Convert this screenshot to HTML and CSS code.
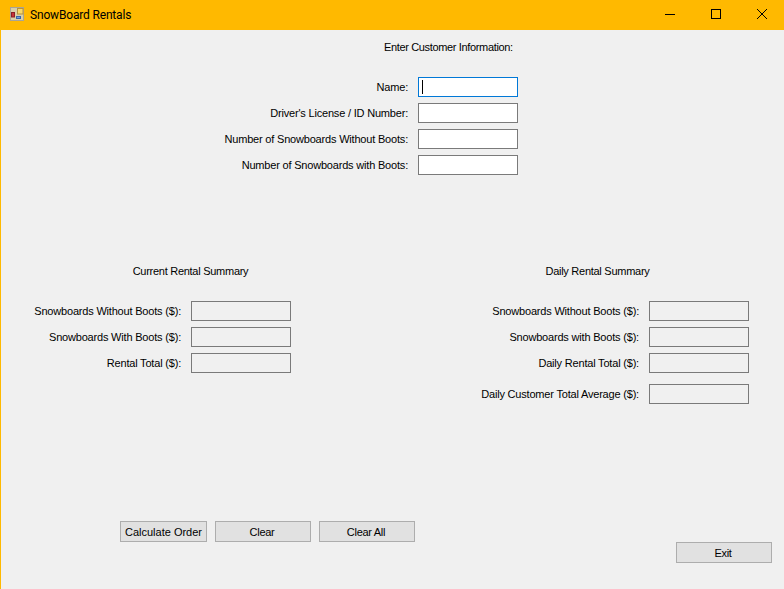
FILE: index.html
```html
<!DOCTYPE html>
<html lang="en">
<head>
<meta charset="utf-8">
<title>SnowBoard Rentals</title>
<link rel="stylesheet" href="styles.css">
</head>
<body>
<div class="window">
  <header class="titlebar">
    <svg class="app-icon" width="14" height="14" viewBox="0 0 14 14">
      <rect x="0.5" y="0.5" width="13" height="13" fill="#d9cfa8" stroke="#a8a498"/>
      <rect x="7.5" y="1.5" width="5.5" height="5.5" fill="#f8d868" stroke="#b8923a"/>
      <rect x="1.5" y="5.5" width="3" height="4.5" fill="#c8323a" stroke="#8a2026"/>
      <rect x="6.5" y="9.5" width="4" height="2" fill="#6f9fdc" stroke="#3a66a8"/>
    </svg>
    <span class="app-title">SnowBoard Rentals</span>
    <div class="controls">
      <div class="control"><svg width="12" height="12" viewBox="0 0 12 12"><path d="M1 5.5H11" stroke="#000"/></svg></div>
      <div class="control"><svg width="12" height="12" viewBox="0 0 12 12"><rect x="1.5" y="0.5" width="9" height="9" fill="none" stroke="#000"/></svg></div>
      <div class="control"><svg width="12" height="12" viewBox="0 0 12 12"><path d="M1 0L11 10M11 0L1 10" stroke="#000"/></svg></div>
    </div>
  </header>

  <main class="client">
    <section class="customer">
      <h2 class="heading customer-heading">Enter Customer Information:</h2>
      <div class="form">
        <label class="label">Name:</label><div class="box input focused"><span class="caret"></span></div>
        <label class="label">Driver's License / ID Number:</label><div class="box input"></div>
        <label class="label">Number of Snowboards Without Boots:</label><div class="box input"></div>
        <label class="label">Number of Snowboards with Boots:</label><div class="box input"></div>
      </div>
    </section>

    <section class="summaries">
      <div class="summary current">
        <h2 class="heading summary-heading">Current Rental Summary</h2>
        <div class="form">
          <label class="label">Snowboards Without Boots ($):</label><div class="box output"></div>
          <label class="label">Snowboards With Boots ($):</label><div class="box output"></div>
          <label class="label">Rental Total ($):</label><div class="box output"></div>
        </div>
      </div>
      <div class="summary daily">
        <h2 class="heading summary-heading">Daily Rental Summary</h2>
        <div class="form">
          <label class="label">Snowboards Without Boots ($):</label><div class="box output"></div>
          <label class="label">Snowboards with Boots ($):</label><div class="box output"></div>
          <label class="label">Daily Rental Total ($):</label><div class="box output"></div>
          <label class="label average">Daily Customer Total Average ($):</label><div class="box output average"></div>
        </div>
      </div>
    </section>

    <section class="actions">
      <div class="action-group">
        <button class="btn btn-calc" type="button">Calculate Order</button>
        <button class="btn btn-wide" type="button">Clear</button>
        <button class="btn btn-wide" type="button">Clear All</button>
      </div>
      <button class="btn btn-wide btn-exit" type="button">Exit</button>
    </section>
  </main>
</div>
</body>
</html>
```

FILE: styles.css
```css
* { box-sizing: border-box; }
html, body { margin: 0; padding: 0; }
body {
  width: 784px;
  height: 589px;
  overflow: hidden;
  font-family: "Liberation Sans", Arial, sans-serif;
  font-size: 11px;
  color: #000;
  background: #f0f0f0;
}
.window {
  display: flex;
  flex-direction: column;
  width: 784px;
  height: 589px;
  border-left: 1px solid #ffb900;
}
.titlebar {
  display: flex;
  align-items: center;
  height: 30px;
  margin-left: -1px;
  padding-left: 10px;
  background: #ffb900;
  flex: none;
}
.app-icon { flex: none; margin-top: -2px; }
.app-title {
  margin-left: 6px;
  font-family: Roboto, "Open Sans", sans-serif;
  font-size: 12px;
  letter-spacing: -0.17px;
  color: #000;
}
.controls { display: flex; margin-left: auto; height: 30px; }
.control {
  display: flex;
  align-items: center;
  justify-content: center;
  width: 46px;
  height: 30px;
  padding-left: 2px;
}
.client { flex: 1; display: flex; flex-direction: column; }
.heading { margin: 0; font-size: 11px; font-weight: 400; line-height: 14px; }
.customer { padding-top: 10px; }
.customer-heading { margin-left: 383px; letter-spacing: -0.35px; }
.form {
  display: grid;
  grid-template-columns: max-content 100px;
  grid-auto-rows: 20px;
  row-gap: 6px;
  column-gap: 10px;
  align-items: center;
  justify-items: end;
  justify-content: start;
}
.customer .form { margin-top: 23px; grid-template-columns: 407px 100px; }
.label { line-height: 14px; white-space: nowrap; letter-spacing: -0.19px; }
.box { width: 100px; height: 20px; border: 1px solid #7a7a7a; }
.input { background: #fff; display: flex; align-items: center; padding-left: 3px; }
.focused { border-color: #0078d7; }
.caret { display: block; width: 1px; height: 14px; background: #000; }
.output { background: #f0f0f0; }
.form .average { align-self: start; margin-top: 5px; }
.form .label.average { margin-top: 8px; }
.summaries { display: flex; margin-top: 89px; }
.summary-heading { text-align: center; letter-spacing: -0.27px; }
.current { width: 290px; }
.current .form { margin-top: 23px; grid-template-columns: 180px 100px; }
.daily { margin-left: 168px; width: 290px; }
.daily .form { margin-top: 23px; grid-template-columns: 180px 100px; }
.current .summary-heading { padding-left: 89px; }
.daily .summary-heading { padding-right: 13px; }
.actions {
  display: flex;
  justify-content: space-between;
  align-items: flex-start;
  margin-top: 122px;
  padding-left: 119px;
  padding-right: 12px;
}
.action-group { display: flex; gap: 8px; }
.btn {
  height: 21px;
  padding: 0 2px 0 0;
  font: inherit;
  color: #000;
  background: #e1e1e1;
  border: 1px solid #adadad;
  border-radius: 0;
}
.btn-calc { width: 87px; padding: 0; }
.btn-wide { width: 96px; letter-spacing: -0.3px; }
.btn-exit { margin-top: 21px; }
```
